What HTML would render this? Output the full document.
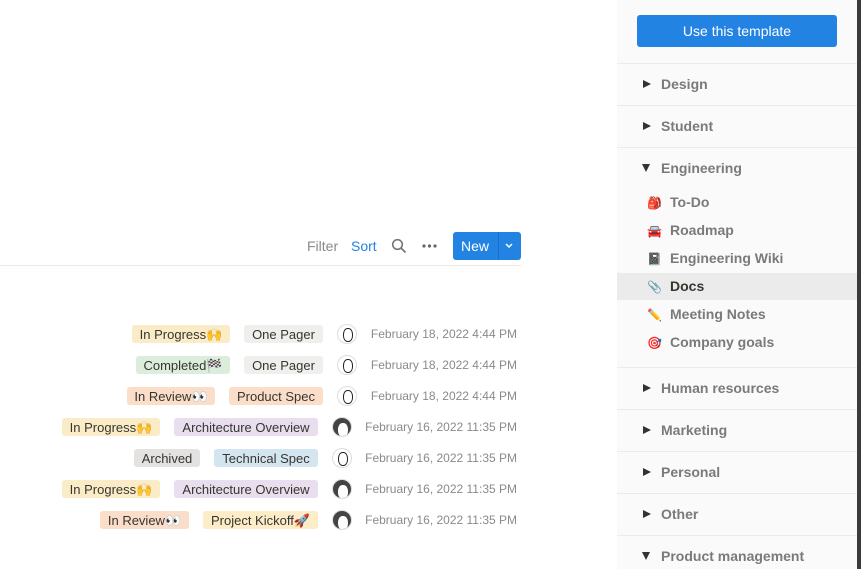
<!DOCTYPE html>
<html><head><meta charset="utf-8"><style>
*{margin:0;padding:0;box-sizing:border-box}
body{width:861px;height:569px;overflow:hidden;background:#fff;font-family:"Liberation Sans",sans-serif;position:relative}
.a{position:absolute}
.tag{position:absolute;height:18px;line-height:19px;font-size:13px;text-align:center;border-radius:3px;color:#37352f;white-space:nowrap}
.date{position:absolute;right:344px;font-size:12px;color:#8a8a88;line-height:19px}
.av{position:absolute;width:20px;height:20px;border-radius:50%;background:#fff;border:1px solid #ddd;overflow:hidden}
.av:after{content:"";position:absolute;left:5px;top:3px;width:8px;height:12px;border:1.5px solid #222;border-radius:45%}
.av.d{background:#444}.av.d:after{background:#fff;border-color:#fff;left:5px;top:5px}
#side{position:absolute;left:617px;top:0;width:240px;height:569px;background:#fafafa}
#edge{position:absolute;left:857px;top:0;width:4px;height:569px;background:#3a3a3a}
.sep{position:absolute;left:0;width:240px;height:1px;background:#ebebeb}
.h{position:absolute;left:44px;font-size:14px;font-weight:bold;color:#7a7a7a;line-height:18px}
.h:before{content:"";position:absolute;left:-18px;top:5px;border-left:8px solid #333;border-top:4.5px solid transparent;border-bottom:4.5px solid transparent}
.h.o:before{left:-19px;top:5px;border-top:8px solid #333;border-left:4.5px solid transparent;border-right:4.5px solid transparent;border-bottom:0}
.s{position:absolute;left:30px;font-size:14px;font-weight:bold;color:#7a7a7a;line-height:18px;white-space:nowrap}
.s i{font-style:normal;font-size:12px;display:inline-block;width:23px}
</style></head><body>
<div class="a" style="left:0;top:265px;width:521px;height:1px;background:#e9e9e7"></div>
<div class="a" style="left:307px;top:238px;font-size:14px;color:#8a8a88">Filter</div>
<div class="a" style="left:351px;top:238px;font-size:14px;color:#2383e2">Sort</div>
<svg class="a" style="left:391px;top:238px" width="16" height="16" viewBox="0 0 16 16"><circle cx="6.5" cy="6.5" r="4.8" fill="none" stroke="#777" stroke-width="1.6"/><path d="M10 10l4.5 4.5" stroke="#777" stroke-width="1.8"/></svg>
<svg class="a" style="left:422px;top:244px" width="16" height="4" viewBox="0 0 16 4"><circle cx="2" cy="2" r="1.6" fill="#666"/><circle cx="7.5" cy="2" r="1.6" fill="#666"/><circle cx="13" cy="2" r="1.6" fill="#666"/></svg>
<div class="a" style="left:453px;top:232px;width:68px;height:28px;background:#2383e2;border-radius:3px"></div>
<div class="a" style="left:498px;top:232px;width:1px;height:28px;background:#1a6fc4"></div>
<div class="a" style="left:461px;top:238px;font-size:14px;color:#fff">New</div>
<svg class="a" style="left:505px;top:243px" width="8" height="6" viewBox="0 0 8 6"><path d="M1 1l3 3 3-3" stroke="#fff" stroke-width="1.5" fill="none"/></svg>

<div class="tag" style="left:132px;top:325px;width:98px;background:#fbecc8">In Progress🙌</div>
<div class="tag" style="left:244px;top:325px;width:79px;background:#efefed">One Pager</div>
<div class="av" style="left:337px;top:324px"></div>
<div class="date" style="top:325px">February 18, 2022 4:44 PM</div>

<div class="tag" style="left:136px;top:356px;width:94px;background:#dbeddb">Completed🏁</div>
<div class="tag" style="left:244px;top:356px;width:79px;background:#efefed">One Pager</div>
<div class="av" style="left:337px;top:355px"></div>
<div class="date" style="top:356px">February 18, 2022 4:44 PM</div>

<div class="tag" style="left:127px;top:387px;width:88px;background:#fadec9">In Review👀</div>
<div class="tag" style="left:229px;top:387px;width:94px;background:#fadec9">Product Spec</div>
<div class="av" style="left:337px;top:386px"></div>
<div class="date" style="top:387px">February 18, 2022 4:44 PM</div>

<div class="tag" style="left:62px;top:418px;width:98px;background:#fbecc8">In Progress🙌</div>
<div class="tag" style="left:174px;top:418px;width:144px;background:#e8deee">Architecture Overview</div>
<div class="av d" style="left:332px;top:417px"></div>
<div class="date" style="top:418px">February 16, 2022 11:35 PM</div>

<div class="tag" style="left:134px;top:449px;width:66px;background:#e3e2e0">Archived</div>
<div class="tag" style="left:214px;top:449px;width:104px;background:#d3e5ef">Technical Spec</div>
<div class="av" style="left:332px;top:448px"></div>
<div class="date" style="top:449px">February 16, 2022 11:35 PM</div>

<div class="tag" style="left:62px;top:480px;width:98px;background:#fbecc8">In Progress🙌</div>
<div class="tag" style="left:174px;top:480px;width:144px;background:#e8deee">Architecture Overview</div>
<div class="av d" style="left:332px;top:479px"></div>
<div class="date" style="top:480px">February 16, 2022 11:35 PM</div>

<div class="tag" style="left:100px;top:511px;width:89px;background:#fadec9">In Review👀</div>
<div class="tag" style="left:203px;top:511px;width:115px;background:#fdecc8">Project Kickoff🚀</div>
<div class="av d" style="left:332px;top:510px"></div>
<div class="date" style="top:511px">February 16, 2022 11:35 PM</div>

<div id="side">
<div class="a" style="left:20px;top:15px;width:200px;height:32px;background:#2383e2;border-radius:3px;color:#fff;font-size:14px;line-height:32px;text-align:center">Use this template</div>
<div class="sep" style="top:63px"></div>
<div class="h" style="top:75px">Design</div>
<div class="sep" style="top:105px"></div>
<div class="h" style="top:117px">Student</div>
<div class="sep" style="top:147px"></div>
<div class="h o" style="top:159px">Engineering</div>
<div class="s" style="top:193px"><i>🎒</i>To-Do</div>
<div class="s" style="top:221px"><i>🚘</i>Roadmap</div>
<div class="s" style="top:249px"><i>📓</i>Engineering Wiki</div>
<div class="a" style="left:0;top:273px;width:240px;height:27px;background:#ebebeb"></div>
<div class="s" style="top:277px;color:#37352f"><i>📎</i>Docs</div>
<div class="s" style="top:305px"><i>✏️</i>Meeting Notes</div>
<div class="s" style="top:333px"><i>🎯</i>Company goals</div>
<div class="sep" style="top:367px"></div>
<div class="h" style="top:379px">Human resources</div>
<div class="sep" style="top:409px"></div>
<div class="h" style="top:421px">Marketing</div>
<div class="sep" style="top:451px"></div>
<div class="h" style="top:463px">Personal</div>
<div class="sep" style="top:493px"></div>
<div class="h" style="top:505px">Other</div>
<div class="sep" style="top:535px"></div>
<div class="h o" style="top:547px">Product management</div>
</div>
<div id="edge"></div>
</body></html>
